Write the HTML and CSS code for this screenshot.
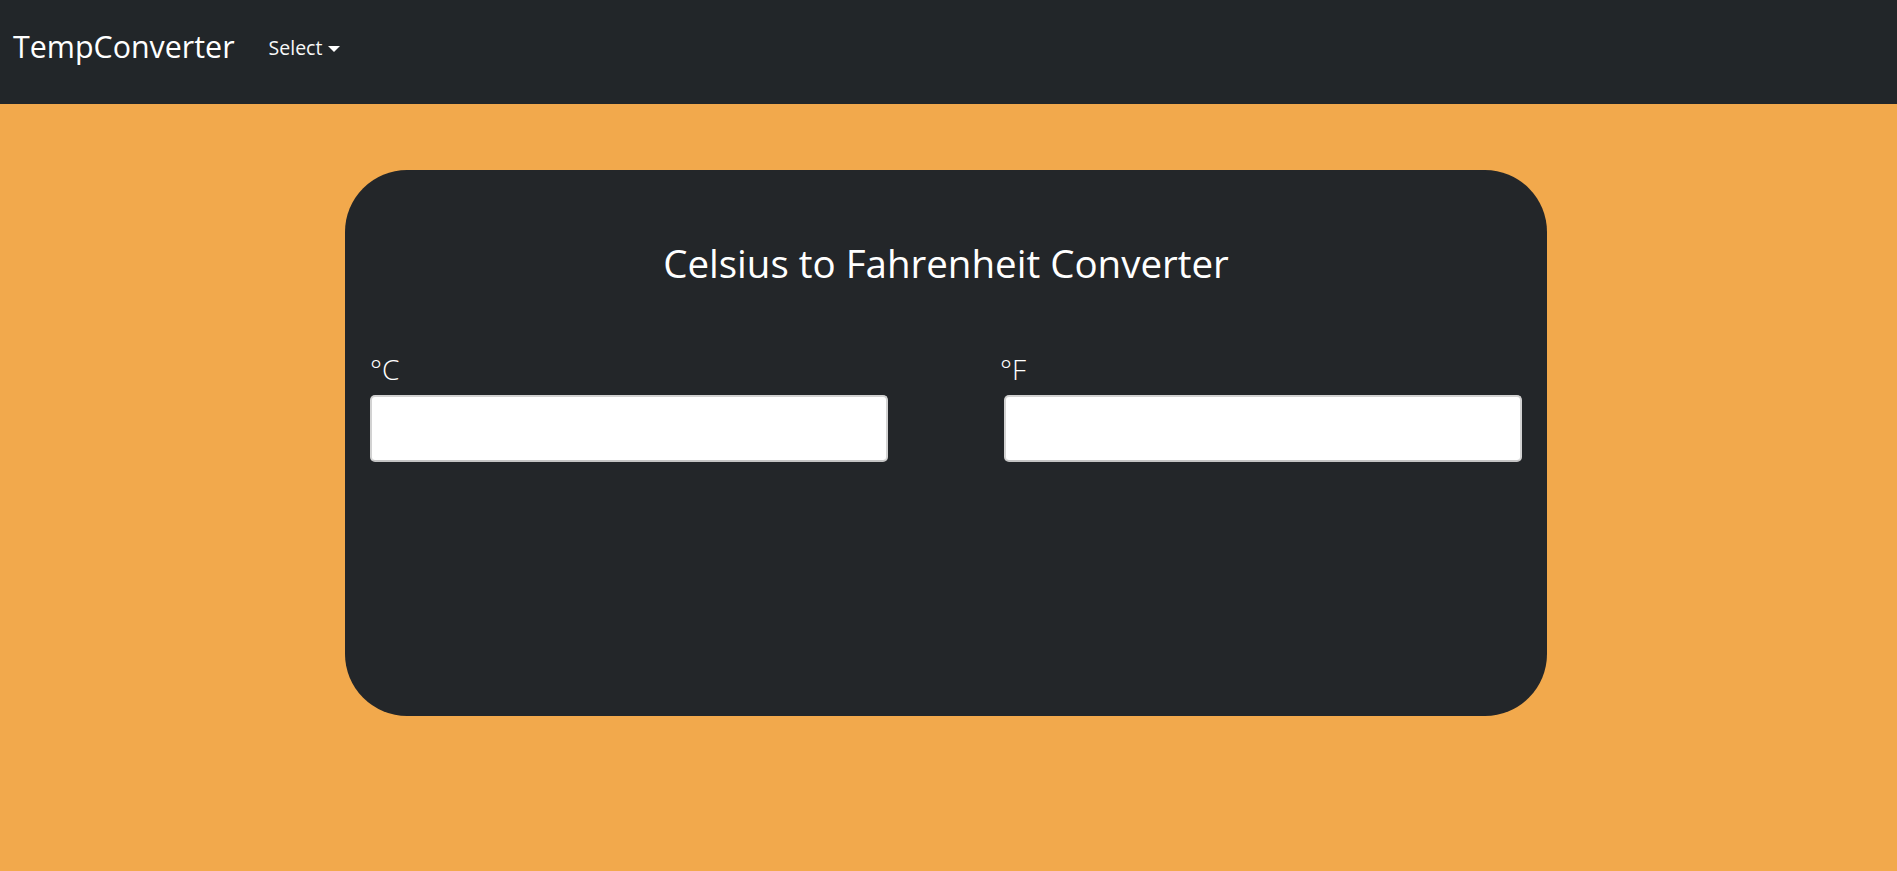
FILE: index.html
```html
<!DOCTYPE html>
<html lang="en">
<head>
<meta charset="utf-8">
<title>TempConverter</title>
<link rel="stylesheet" href="styles.css">
</head>
<body>
<nav class="navbar">
  <a class="brand" href="#">TempConverter</a>
  <a class="nav-link" href="#">Select<span class="caret"></span></a>
</nav>
<main class="page">
  <section class="card">
    <h1 class="title">Celsius to Fahrenheit Converter</h1>
    <div class="fields">
      <div class="field">
        <label class="label" for="c">°C</label>
        <input class="input" id="c" type="text">
      </div>
      <div class="field field-f">
        <label class="label" for="f">°F</label>
        <input class="input input-f" id="f" type="text">
      </div>
    </div>
  </section>
</main>
</body>
</html>
```

FILE: styles.css
```css
html, body {
  margin: 0;
  padding: 0;
}
body {
  background: #f2a94c;
  font-family: "Open Sans", "Liberation Sans", sans-serif;
  color: #fff;
  min-height: 871px;
}
.navbar {
  box-sizing: border-box;
  height: 104px;
  background: #222629;
  display: flex;
  align-items: flex-start;
  padding: 0 13px;
}
.brand {
  margin-top: 27px;
  color: #fff;
  text-decoration: none;
  font-size: 30.4px;
  line-height: 40px;
}
.nav-link {
  margin-top: 36px;
  margin-left: 34px;
  color: #f8f8f8;
  text-decoration: none;
  font-size: 19.5px;
  font-weight: 400;
  line-height: 24px;
}
.caret {
  display: inline-block;
  margin-left: 6px;
  vertical-align: 3px;
  border-top: 6px solid #fff;
  border-left: 6px solid transparent;
  border-right: 6px solid transparent;
}
.page {
  padding-top: 66px;
}
.card {
  box-sizing: border-box;
  width: 1202px;
  height: 546px;
  margin: 0 0 0 345px;
  background: #232629;
  border-radius: 62px;
  padding: 70px 25px 0 25px;
}
.title {
  margin: 0;
  text-align: center;
  font-weight: 400;
  font-size: 38.5px;
  line-height: 47px;
}
.fields {
  margin-top: 65px;
  display: grid;
  grid-template-columns: 518px 522px;
  justify-content: space-between;
}
.field {
  display: flex;
  flex-direction: column;
}
.label {
  font-size: 28px;
  font-weight: 300;
  line-height: 34px;
  margin-bottom: 9px;
}
.input {
  box-sizing: border-box;
  width: 518px;
  height: 67px;
  margin: 0;
  border: 2px solid #d2d2d2;
  border-bottom-color: #c4c4c4;
  border-radius: 5px;
  background: #fff;
  font-family: inherit;
  font-size: 19px;
  padding: 0 14px;
}
.input-f {
  margin-left: 4px;
}
```
